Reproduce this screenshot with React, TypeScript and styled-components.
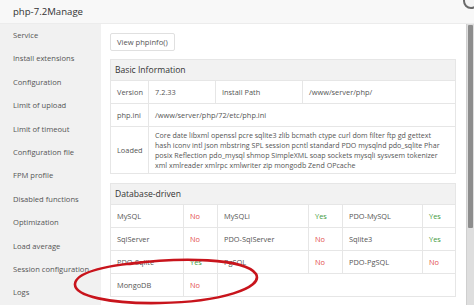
import React from "react";
import styled, { createGlobalStyle } from "styled-components";

const GlobalStyle = createGlobalStyle`
    html, body {
        margin: 0;
        padding: 0;
        background: #ffffff;
    }
    body {
        font-family: "Open Sans", "Noto Sans", "Liberation Sans", sans-serif;
    }
`

const Window = styled.div`
    position: relative;
    width: 474px;
    height: 305px;
    overflow: hidden;
    display: flex;
    flex-direction: column;
    background: #ffffff;
`

const TitleBar = styled.div`
    height: 23px;
    flex: 0 0 23px;
    display: flex;
    align-items: center;
    padding-left: 13px;
    background: #f8f8f8;
    border-bottom: 1px solid #ececec;
    color: #333;
    font-size: 9.6px;
`

const CloseRing = styled.div`
    position: absolute;
    top: -7px;
    right: -5px;
    width: 12px;
    height: 12px;
    border-radius: 50%;
    border: 2px solid #6a6a6a;
    background: #f4f4f4;
`

const Body = styled.div`
    flex: 1;
    display: flex;
    min-height: 0;
`

const Sidebar = styled.div`
    width: 101px;
    flex: 0 0 101px;
    background: #f1f1f1;
    display: flex;
    flex-direction: column;
`

const NavItem = styled.div`
    height: 23.4px;
    line-height: 23.4px;
    padding-left: 13px;
    font-size: 7.6px;
    color: #555;
    white-space: nowrap;
`

const Content = styled.div`
    flex: 1;
    padding: 9px 10px 0 9px;
    display: flex;
    flex-direction: column;
    align-items: flex-start;
    gap: 8px;
`

const Button = styled.div`
    height: 16px;
    line-height: 16px;
    padding: 0 6px;
    border: 1px solid #e0e0e0;
    border-radius: 2px;
    font-size: 7.6px;
    color: #555;
    background: #fff;
`

const Table = styled.table<{ $mb?: number }>`
    width: 346px;
    border-collapse: collapse;
    table-layout: fixed;
    font-size: 7.4px;
    color: #555;
    margin-bottom: ${(p) => p.$mb ?? 0}px;
`

const HeadCell = styled.th`
    height: 20px;
    padding: 0 4px;
    text-align: left;
    font-weight: 400;
    font-size: 8.6px;
    color: #333;
    background: #f2f2f2;
    border: 1px solid #e6e6e6;
`

const Cell = styled.td<{ $tone?: "yes" | "no" }>`
    height: 22px;
    padding: 0 6px;
    border: 1px solid #e6e6e6;
    white-space: nowrap;
    overflow: hidden;
    color: ${(p) => (p.$tone === "yes" ? "#3f9a3c" : p.$tone === "no" ? "#e4504e" : "#555")};
`

const LoadedCell = styled(Cell)`
    height: 42px;
    font-size: 7.1px;
    line-height: 10px;
    white-space: normal;
    padding: 2px 6px;
`

const Line = styled.div`
    white-space: nowrap;
`

const Scrollbar = styled.div`
    width: 7px;
    flex: 0 0 7px;
    border-left: 1px solid #cfcfcf;
    background: #dedede;
    position: relative;
`

const Thumb = styled.div`
    height: 203px;
    margin: 1px 1px 0 1px;
    background: #8d8d8d;
    border-radius: 1px;
`

const Circle = styled.svg`
    position: absolute;
    left: 70px;
    top: 256px;
    pointer-events: none;
`

const nav = [
    "Service",
    "Install extensions",
    "Configuration",
    "Limit of upload",
    "Limit of timeout",
    "Configuration file",
    "FPM profile",
    "Disabled functions",
    "Optimization",
    "Load average",
    "Session configuration",
    "Logs",
]

const loaded = [
    "Core date libxml openssl pcre sqlite3 zlib bcmath ctype curl dom filter ftp gd gettext",
    "hash iconv intl json mbstring SPL session pcntl standard PDO mysqlnd pdo_sqlite Phar",
    "posix Reflection pdo_mysql shmop SimpleXML soap sockets mysqli sysvsem tokenizer",
    "xml xmlreader xmlrpc xmlwriter zip mongodb Zend OPcache",
]

type Db = [string, boolean]
const dbRows: Db[][] = [
    [["MySQL", false], ["MySQLi", true], ["PDO-MySQL", true]],
    [["SqlServer", false], ["PDO-SqlServer", false], ["Sqlite3", true]],
    [["PDO-Sqlite", true], ["PgSQL", false], ["PDO-PgSQL", false]],
    [["MongoDB", false]],
]

const App: React.FC = () => {
    return (
        <>
            <GlobalStyle />
            <Window>
                <TitleBar>php-7.2Manage</TitleBar>
                <CloseRing />
                <Body>
                    <Sidebar>
                        {nav.map((n) => <NavItem key={n}>{n}</NavItem>)}
                    </Sidebar>
                    <Content>
                        <Button>View phpinfo()</Button>
                        <Table $mb={1}>
                            <colgroup>
                                <col style={{ width: 38 }} />
                                <col style={{ width: 67 }} />
                                <col style={{ width: 87 }} />
                                <col />
                            </colgroup>
                            <thead>
                                <tr><HeadCell colSpan={4}>Basic Information</HeadCell></tr>
                            </thead>
                            <tbody>
                                <tr>
                                    <Cell>Version</Cell>
                                    <Cell>7.2.33</Cell>
                                    <Cell>Install Path</Cell>
                                    <Cell>/www/server/php/</Cell>
                                </tr>
                                <tr>
                                    <Cell>php.ini</Cell>
                                    <Cell colSpan={3}>/www/server/php/72/etc/php.ini</Cell>
                                </tr>
                                <tr>
                                    <Cell>Loaded</Cell>
                                    <LoadedCell colSpan={3}>
                                        {loaded.map((l) => <Line key={l}>{l}</Line>)}
                                    </LoadedCell>
                                </tr>
                            </tbody>
                        </Table>
                        <Table>
                            <colgroup>
                                <col style={{ width: 73 }} />
                                <col style={{ width: 34 }} />
                                <col style={{ width: 91 }} />
                                <col style={{ width: 34 }} />
                                <col style={{ width: 80 }} />
                                <col />
                            </colgroup>
                            <thead>
                                <tr><HeadCell colSpan={6}>Database-driven</HeadCell></tr>
                            </thead>
                            <tbody>
                                {dbRows.map((row, i) => (
                                    <tr key={i}>
                                        {row.map(([name, ok]) => (
                                            <React.Fragment key={name}>
                                                <Cell>{name}</Cell>
                                                <Cell $tone={ok ? "yes" : "no"}>{ok ? "Yes" : "No"}</Cell>
                                            </React.Fragment>
                                        ))}
                                        {row.length === 1 && <Cell colSpan={4} />}
                                    </tr>
                                ))}
                            </tbody>
                        </Table>
                    </Content>
                    <Scrollbar>
                        <Thumb />
                    </Scrollbar>
                </Body>
                <Circle width="200" height="52" viewBox="0 0 200 52">
                    <path
                        d="M60 8 C110 1 175 2 186 18 C194 32 150 46 90 47 C40 48 4 40 5 28 C6 17 30 10 75 6"
                        fill="none"
                        stroke="#c8141c"
                        strokeWidth="2.6"
                        strokeLinecap="round"
                    />
                </Circle>
            </Window>
        </>
    );
}

export default App
